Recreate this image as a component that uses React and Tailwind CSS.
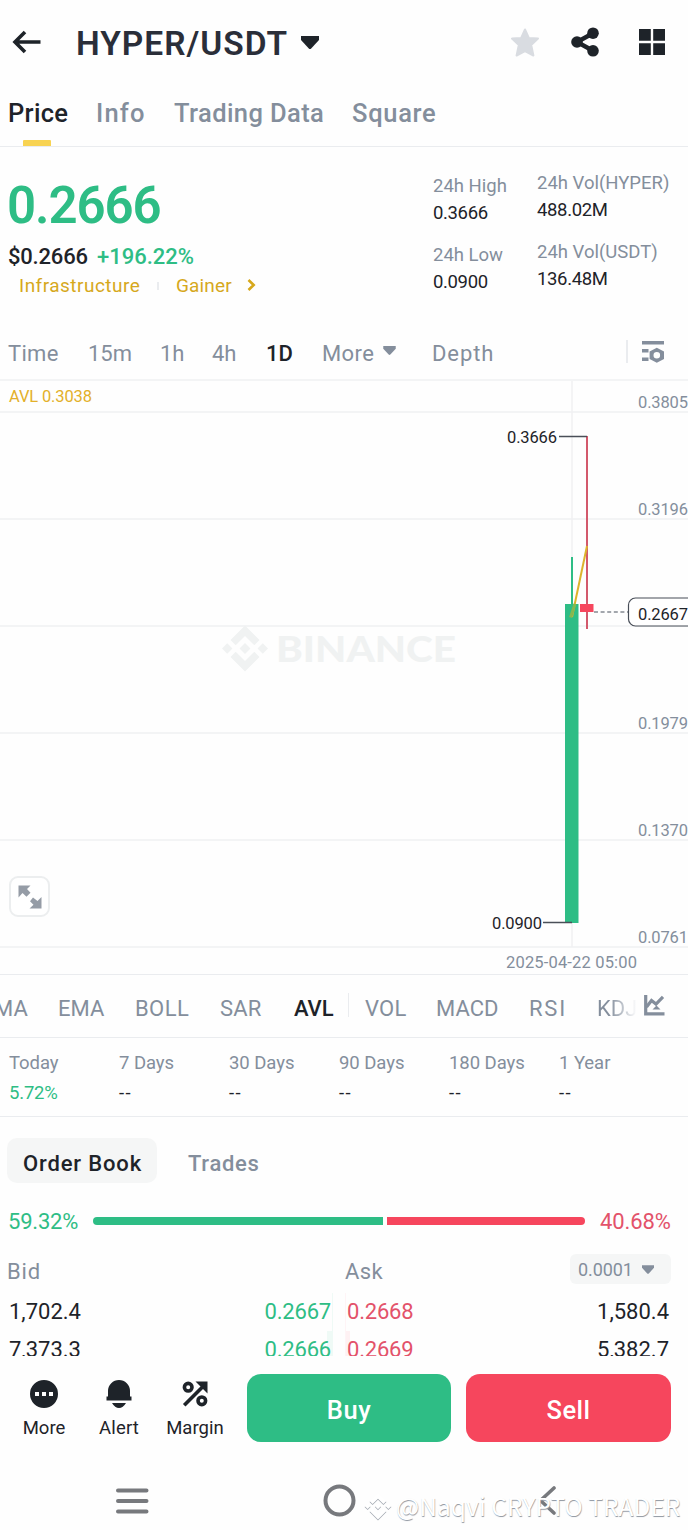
import React from 'react';

const GRID = [
  { y: 32, label: '0.3805' },
  { y: 139, label: '0.3196' },
  { y: 246, label: null },
  { y: 353, label: '0.1979' },
  { y: 460, label: '0.1370' },
  { y: 567, label: '0.0761' },
];

const PERIODS = [
  ['Today', '5.72%'],
  ['7 Days', '--'],
  ['30 Days', '--'],
  ['90 Days', '--'],
  ['180 Days', '--'],
  ['1 Year', '--'],
];

function Caret({ className }) {
  return (
    <svg viewBox="0 0 18 13" className={className} fill="currentColor">
      <path d="M0 0H18V4L10.2 12.4Q9 13.4 7.8 12.4L0 4Z" />
    </svg>
  );
}

function BinanceMark() {
  return (
    <>
      <path d="M23 0L37.5 14.5L32.3 19.7L23 10.4L13.7 19.7L8.5 14.5Z" />
      <path d="M23 46L37.5 31.5L32.3 26.3L23 35.6L13.7 26.3L8.5 31.5Z" />
      <path d="M0 23L5.2 17.8L10.4 23L5.2 28.2Z" />
      <path d="M35.6 23L40.8 17.8L46 23L40.8 28.2Z" />
      <path d="M17.6 23L23 17.6L28.4 23L23 28.4Z" />
    </>
  );
}

function Header() {
  return (
    <header className="flex h-[84px] items-center pl-3 pr-[23px] text-[#1e2329]">
      <svg viewBox="0 0 29 24" className="h-6 w-[29px]" fill="none" stroke="currentColor" strokeWidth="3.6">
        <path d="M28.5 12H3M13 2L3 12L13 22" />
      </svg>
      <h1 className="ml-[35px] mt-1 w-[225px] whitespace-nowrap text-[33.5px] font-semibold leading-10 tracking-[1px] text-[#2a2e39]">
        HYPER/USDT
      </h1>
      <Caret className="h-[13px] w-[18px]" />
      <svg viewBox="0 0 28 29" className="ml-auto h-[29px] w-7 text-[#d9dce1]" fill="currentColor" stroke="currentColor" strokeWidth="2" strokeLinejoin="round">
        <path d="M14 1.5L17.8 10L27 10.6L20.2 17L22.4 27.5L14 23L5.6 27.5L7.8 17L1 10.6L10.2 10Z" />
      </svg>
      <svg viewBox="0 0 28 30" className="ml-8 h-[30px] w-7" fill="currentColor">
        <circle cx="6" cy="15" r="5.8" />
        <circle cx="22" cy="6.2" r="5.8" />
        <circle cx="22" cy="23.8" r="5.8" />
        <path d="M22 6.2L6 15L22 23.8" fill="none" stroke="currentColor" strokeWidth="4.4" />
      </svg>
      <svg viewBox="0 0 26 26" className="ml-[40px] h-[26px] w-[26px]" fill="currentColor">
        <path d="M0 0H11.8V11.8H0ZM14.2 0H26V11.8H14.2ZM0 14.2H11.8V26H0ZM14.2 14.2H26V26H14.2Z" />
      </svg>
    </header>
  );
}

function PageTabs() {
  return (
    <nav className="flex h-[63px] border-b border-[#eaecef] text-[25.5px] font-medium leading-[58px] text-[#848e9c]">
      <div className="ml-[8px] flex w-[88px] flex-col">
        <span className="h-[56px] tracking-[0.3px] text-[#1e2329]">Price</span>
        <span className="ml-[15px] h-1.5 w-7 rounded-t-[1px] bg-[#f8d352]" />
      </div>
      <span className="w-[78px] tracking-[1.2px]">Info</span>
      <span className="w-[178px] whitespace-nowrap tracking-[0.4px]">Trading Data</span>
      <span className="tracking-[0.7px]">Square</span>
    </nav>
  );
}

function Stat({ label, value }) {
  return (
    <div className="h-[69px] whitespace-nowrap leading-[27px]">
      <div className="text-[#848e9c]">{label}</div>
      <div className="tracking-[-0.35px] text-[#1e2329]">{value}</div>
    </div>
  );
}

function Summary() {
  return (
    <section className="flex h-[177px]">
      <div className="w-[433px] pt-[31px]">
        <div className="pl-[7px] text-[51px] font-semibold leading-[56px] tracking-[-1.1px] text-[#2ebd85]">0.2666</div>
        <div className="mt-[8px] flex h-[30px] items-center pl-2 text-[22px] font-medium leading-[30px]">
          <span className="w-[89px] tracking-[-0.2px] text-[#1e2329]">$0.2666</span>
          <span className="text-[#2ebd85]">+196.22%</span>
        </div>
        <div className="flex h-7 items-center pl-[19px] text-[19px] leading-7 text-[#d6a81c]">
          <span className="w-[138px] tracking-[0.48px]">Infrastructure</span>
          <span className="h-2 w-0.5 bg-[#eaecef]" />
          <span className="ml-[17px] w-[71px] tracking-[0.15px]">Gainer</span>
          <svg viewBox="0 0 9 12" className="-mt-0.5 h-3 w-[9px]" fill="none" stroke="currentColor" strokeWidth="2.6">
            <path d="M1.5 1L6.7 6L1.5 11" />
          </svg>
        </div>
      </div>
      <div className="w-[104px] pt-[26px] text-[18.5px]">
        <Stat label="24h High" value="0.3666" />
        <Stat label="24h Low" value="0.0900" />
      </div>
      <div className="pt-[23px] text-[18.5px]">
        <Stat label="24h Vol(HYPER)" value="488.02M" />
        <Stat label="24h Vol(USDT)" value="136.48M" />
      </div>
    </section>
  );
}

function Intervals() {
  return (
    <nav className="flex h-[57px] items-center border-b-2 border-[#f3f4f5] pl-2 pt-[3px] text-[22px] text-[#848e9c]">
      <span className="w-[80px] tracking-[0.3px]">Time</span>
      <span className="w-[72px]">15m</span>
      <span className="w-[52px]">1h</span>
      <span className="w-[54px]">4h</span>
      <span className="w-[56px] font-medium text-[#1e2329]">1D</span>
      <span className="w-[61px] tracking-[0.4px]">More</span>
      <Caret className="-mt-[5px] h-[9px] w-[13px]" />
      <span className="ml-[36px] w-[194px] tracking-[0.9px]">Depth</span>
      <span className="-mt-1 h-[23px] w-0.5 bg-[#eaecef]" />
      <svg viewBox="0 0 24 24" className="-mt-0.5 ml-[13px] h-6 w-6" fill="currentColor">
        <path d="M1 1H23V4.4H1ZM1 9H7.5V12.4H1ZM1 17.6H7.5V21H1Z" />
        <path fillRule="evenodd" d="M15.8 7.8L23 11.6V19L15.8 22.8L8.6 19V11.6ZM15.8 12A3.3 3.3 0 1 0 15.8 18.6A3.3 3.3 0 1 0 15.8 12Z" />
      </svg>
    </nav>
  );
}

function PriceChart() {
  return (
    <section className="relative h-[594px] border-b border-[#eaecef]">
      <svg viewBox="0 1 688 593" className="block h-[593px] w-[688px] font-['Roboto',sans-serif]" fontSize="16.5">
        {GRID.map((g) => (
          <line key={g.y} x1="0" x2="688" y1={g.y} y2={g.y} stroke="#f3f4f5" strokeWidth="2" />
        ))}
        <line x1="572" x2="572" y1="0" y2="567" stroke="#f0f1f2" strokeWidth="1.5" />
        <g transform="translate(222 245.5)" fill="#f0f2f2">
          <BinanceMark />
        </g>
        <text x="276" y="282" fontSize="36" className="font-['Lato',sans-serif] font-black" fill="#f0f2f2" textLength="180" lengthAdjust="spacingAndGlyphs">BINANCE</text>
        {GRID.filter((g) => g.label).map((g) => (
          <text key={g.label} x="638" y={g.y - 4} fill="#848e9c" textLength="50">{g.label}</text>
        ))}
        <rect x="571" y="177" width="2" height="60" fill="#2ebd85" />
        <rect x="565" y="224" width="13.5" height="319" fill="#2ebd85" />
        <rect x="586" y="56" width="2" height="193" fill="#d3596c" />
        <rect x="580" y="224" width="13.5" height="8" fill="#f6465d" />
        <path d="M572 237L587 166" stroke="#dcb32c" strokeWidth="2" fill="none" />
        <path d="M570.5 237.5L575 224" stroke="#85b850" strokeWidth="3" fill="none" />
        <path d="M559 56.5H587M543 542.5H572" stroke="#4a4f58" strokeWidth="1.3" />
        <text x="507" y="63" fill="#1e2329" textLength="50">0.3666</text>
        <text x="492" y="549" fill="#1e2329" textLength="50">0.0900</text>
        <path d="M594 232H628" stroke="#858b93" strokeWidth="1.5" strokeDasharray="4 2.6" />
        <rect x="628.5" y="218" width="80" height="28" rx="7" fill="#fff" stroke="#474d57" strokeWidth="1.2" />
        <text x="638" y="240" fill="#1e2329" textLength="50">0.2667</text>
        <text x="506" y="588" fill="#848e9c" textLength="131">2025-04-22 05:00</text>
        <text x="9" y="22" fill="#e3b02a" textLength="83">AVL 0.3038</text>
      </svg>
      <button className="absolute left-[9px] top-[495px] flex h-[41px] w-[41px] items-center justify-center rounded-[9px] border-2 border-[#eceeef] bg-white">
        <svg viewBox="0 0 24 24" className="h-6 w-6 text-[#959ca6]">
          <path d="M0.5 0.5H12.5L9 4L12.5 7.8L8.5 11.8L4.5 8L0.5 12.5Z" fill="currentColor" />
          <path d="M23.5 23.5H11.5L15.5 19.8L12 16.2L15 12.5L19.5 16L23.5 12Z" fill="currentColor" />
        </svg>
      </button>
    </section>
  );
}

function Indicators() {
  return (
    <nav className="flex h-[63px] items-center overflow-hidden border-b border-[#eaecef] pt-[5px] text-[22px] text-[#848e9c]">
      <span className="-ml-[6px] w-[64px] shrink-0">MA</span>
      <span className="w-[77px] shrink-0 tracking-[0.1px]">EMA</span>
      <span className="w-[85px] shrink-0 tracking-[0.4px]">BOLL</span>
      <span className="w-[74px] shrink-0 tracking-[0.2px]">SAR</span>
      <span className="w-[54px] shrink-0 font-medium tracking-[-0.1px] text-[#1e2329]">AVL</span>
      <span className="-mt-[8px] h-[24px] w-px shrink-0 bg-[#eaecef]" />
      <span className="ml-[16px] w-[71px] shrink-0 tracking-[0.2px]">VOL</span>
      <span className="w-[93px] shrink-0">MACD</span>
      <span className="w-[68px] shrink-0 tracking-[1.8px]">RSI</span>
      <span className="w-[40px] shrink-0 overflow-hidden bg-gradient-to-r from-[#848e9c] from-30% to-white bg-clip-text text-transparent">KDJ</span>
      <svg viewBox="0 0 21 21" className="-mt-[6px] ml-[7px] h-[21px] w-[21px] shrink-0" fill="none" stroke="currentColor" strokeWidth="3.2">
        <path d="M1.7 0V18.9H20.5" />
        <path d="M2.5 12L7.5 5.5L12 9L19 1.8" />
        <path d="M8.5 14.5L12.5 10.5L16.5 14.5Z" fill="currentColor" stroke="none" />
      </svg>
    </nav>
  );
}

function Performance() {
  return (
    <section className="flex h-[79px] border-b border-[#eaecef] pl-[9px] pt-[10px] text-[18.5px] leading-[30px]">
      {PERIODS.map(([name, value]) => (
        <div key={name} className="w-[110px] whitespace-nowrap">
          <div className="tracking-[-0.05px] text-[#848e9c]">{name}</div>
          <div className={value === '--' ? 'tracking-[1.5px] text-[#1e2329]' : 'tracking-[-0.2px] text-[#2ebd85]'}>{value}</div>
        </div>
      ))}
    </section>
  );
}

function OrderBook() {
  return (
    <section className="h-[239px] overflow-hidden pt-[21px] text-[22px]">
      <div className="flex h-[45px] items-center pl-[7px] font-medium">
        <span className="flex h-full w-[150px] items-center whitespace-nowrap rounded-[10px] bg-[#f5f6f6] pl-4 pt-[5px] tracking-[0.85px] text-[#1e2329]">Order Book</span>
        <span className="ml-[31px] pt-[5px] tracking-[0.7px] text-[#848e9c]">Trades</span>
      </div>
      <div className="mt-[22px] flex h-8 items-center pl-2">
        <span className="w-[85px] tracking-[-0.2px] text-[#2ebd85]">59.32%</span>
        <span className="h-2 w-[290px] rounded-l-full bg-[#2ebd85]" />
        <span className="ml-1 h-2 w-[198px] rounded-r-full bg-[#f6465d]" />
        <span className="ml-[15px] tracking-[-0.1px] text-[#e3526a]">40.68%</span>
      </div>
      <div className="mt-[17px] flex h-[30px] items-center text-[#848e9c]">
        <span className="w-[345px] pl-[7px] pt-[5px] tracking-[0.9px]">Bid</span>
        <span className="w-[225px] pt-[5px] tracking-[0.4px]">Ask</span>
        <span className="flex h-[30px] w-[101px] items-center rounded-md bg-[#f5f6f6] pl-2 text-[18px] text-[#848e9c]">
          <span className="w-[64px] pt-px tracking-[-0.1px]">0.0001</span>
          <Caret className="h-[9px] w-3" />
        </span>
      </div>
      <div className="mt-[9px] leading-[38px] tracking-[-0.2px]">
        {[
          ['1,702.4', '0.2667', '0.2668', '1,580.4'],
          ['7,373.3', '0.2666', '0.2669', '5,382.7'],
        ].map(([bidQty, bid, ask, askQty], i) => (
          <div key={bid} className="flex h-[38px] pl-[9px] pr-[19px]">
            <span className="w-[175px] tracking-[0px] text-[#1e2329]">{bidQty}</span>
            <span className={i === 0 ? 'h-[38px] w-[149px] border-r border-[#effaf6] pr-px text-right text-[#2ebd85]' : 'h-[38px] w-[149px] border-r border-[#effaf6] bg-[linear-gradient(to_left,#effaf6_5px,transparent_5px)] pr-px text-right text-[#2ebd85]'}>{bid}</span>
            <span className={i === 0 ? 'ml-3 h-[38px] border-l border-[#fef4f6] pl-px text-[#e3526a]' : 'ml-3 h-[38px] border-l border-[#fef4f6] bg-[linear-gradient(to_right,#fef1f3_4px,transparent_4px)] pl-px text-[#e3526a]'}>{ask}</span>
            <span className="ml-auto tracking-[0px] text-[#1e2329]">{askQty}</span>
          </div>
        ))}
      </div>
    </section>
  );
}

function Action({ label, className, children }) {
  return (
    <div className={className}>
      <svg viewBox="0 0 28 28" className="h-7 w-7" fill="currentColor">{children}</svg>
      <span className="mt-[7px] text-[18.5px] leading-[26px]">{label}</span>
    </div>
  );
}

function ActionBar() {
  return (
    <section className="flex h-[104px] pt-[18px] text-[#1e2329]">
      <Action label="More" className="ml-[7px] flex w-[74px] flex-col items-center pt-[6px]">
        <path fillRule="evenodd" d="M14 0A14 14 0 1 0 14 28A14 14 0 1 0 14 0ZM5 12H9V16H5ZM12 12H16V16H12ZM19 12H23V16H19Z" />
      </Action>
      <Action label="Alert" className="flex w-[76px] flex-col items-center pt-[6px] tracking-[0.2px]">
        <path d="M3 11A11 11 0 0 1 25 11V16.5H26.5V20.5H1.5V16.5H3ZM7 23H21Q18 28 14 28Q10 28 7 23Z" />
      </Action>
      <Action label="Margin" className="flex w-[76px] flex-col items-center pt-[6px] tracking-[0.05px]">
        <g fill="none" stroke="currentColor" strokeWidth="3.6">
          <circle cx="7.2" cy="7.2" r="3.8" />
          <circle cx="20.8" cy="20.8" r="3.8" />
          <path d="M3.2 25.2L22 6.4" />
        </g>
        <path d="M14.5 1.5H26.5V13.5Z" />
      </Action>
      <button className="ml-[14px] h-[68px] w-[204px] rounded-[14px] bg-[#2ebd85] pt-1 text-[25.5px] font-medium tracking-[0.5px] text-white">Buy</button>
      <button className="ml-[15px] h-[68px] w-[205px] rounded-[14px] bg-[#f6465d] pt-1 text-[25.5px] font-medium tracking-[0.5px] text-white">Sell</button>
    </section>
  );
}

function SystemBar() {
  return (
    <footer className="relative flex h-[70px] pt-[24px] text-[#77797d]">
      <svg viewBox="0 0 34 34" className="ml-[115px] h-[34px] w-[34px]" fill="none" stroke="currentColor" strokeWidth="4" strokeLinecap="round">
        <path d="M3 6.5H31.5M3 17H31.5M3 27.5H31.5" />
      </svg>
      <svg viewBox="0 0 34 34" className="ml-[174px] h-[34px] w-[34px]" fill="none" stroke="currentColor" strokeWidth="4">
        <circle cx="16.5" cy="16.5" r="14" />
      </svg>
      <svg viewBox="0 0 20 34" className="ml-[181px] h-[34px] w-5" fill="none" stroke="currentColor" strokeWidth="3.6" strokeLinecap="round" strokeLinejoin="round">
        <path d="M16 4L2.5 16.5L16 29" />
      </svg>
      <div className="absolute left-[364px] top-[27px] flex h-[38px] items-center text-white">
        <svg viewBox="-1 -1 48 48" className="h-7 w-7 drop-shadow-[0_1px_0.5px_#a2a8b0]" fill="currentColor">
          <BinanceMark />
        </svg>
        <span className="ml-[4px] whitespace-nowrap font-['Noto_Sans_CJK_SC',sans-serif] text-[24.5px] leading-[38px] tracking-[0.05px] [text-shadow:0.5px_1px_0.8px_#9198a2]">
          @Naqvi CRYPTO TRADER
        </span>
      </div>
    </footer>
  );
}

export default function App() {
  return (
    <main className="h-[1530px] w-[688px] overflow-hidden bg-[#fefefe] font-['Roboto',sans-serif]">
      <Header />
      <PageTabs />
      <Summary />
      <Intervals />
      <PriceChart />
      <Indicators />
      <Performance />
      <OrderBook />
      <ActionBar />
      <SystemBar />
    </main>
  );
}
